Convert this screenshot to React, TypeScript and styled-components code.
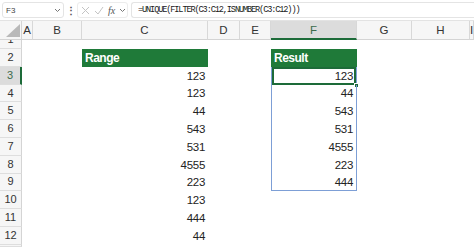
import styled, { createGlobalStyle } from "styled-components";

const GlobalStyle = createGlobalStyle`
  html, body { margin: 0; padding: 0; background: #ffffff; }
  body {
    width: 474px;
    height: 247px;
    overflow: hidden;
    font-family: "Liberation Sans Narrow", "Liberation Sans", Arial, sans-serif;
  }
`;

const Window = styled.div`
  width: 474px;
  height: 247px;
  overflow: hidden;
  display: flex;
  flex-direction: column;
  background: #fff;
`;

const FormulaBar = styled.div`
  height: 21px;
  flex: none;
  display: flex;
  align-items: center;
  padding: 0 0 0 2px;
  box-sizing: border-box;
  background: #fff;
  border-bottom: 1px solid #e3e3e3;
`;

const NameBox = styled.div`
  width: 62px;
  height: 16px;
  box-sizing: border-box;
  display: flex;
  align-items: center;
  justify-content: space-between;
  padding: 0 2px 0 3px;
  border: 1px solid #e4e4e4;
  border-radius: 3px;
  font-family: "Liberation Sans", Arial, sans-serif;
  font-size: 8px;
  color: #444;
`;

const Dots = styled.div`
  width: 13px;
  text-align: center;
  font-family: "Liberation Sans", Arial, sans-serif;
  font-size: 10px;
  font-weight: bold;
  color: #555;
`;

const IconBox = styled.div`
  width: 51px;
  height: 16px;
  box-sizing: border-box;
  display: flex;
  align-items: center;
  gap: 4px;
  padding-left: 3px;
  border: 1px solid #ececec;
  border-radius: 3px;
`;

const Fx = styled.span`
  font-family: "Liberation Serif", "Times New Roman", serif;
  font-style: italic;
  font-size: 10px;
  color: #555;
`;

const FormulaInput = styled.div`
  flex: 1;
  height: 16px;
  margin-left: 3px;
  box-sizing: border-box;
  display: flex;
  align-items: center;
  padding-left: 6px;
  border: 1px solid #e4e4e4;
  border-right: none;
  border-radius: 3px 0 0 3px;
  font-family: "Liberation Mono", "DejaVu Sans Mono", monospace;
  font-size: 8.6px;
  letter-spacing: -1.12px;
  color: #1a1a1a;
  white-space: nowrap;
`;

const Sheet = styled.div`
  flex: 1;
  display: grid;
  grid-template-columns: 22px 11px 49px 126px 32px 31px 86px 55px 58px 1fr;
  grid-template-rows: 19px 9px repeat(11, 17.8px) 1fr;
  overflow: hidden;
  font-size: 11.5px;
  color: #222;
`;

const Corner = styled.div`
  background: #f6f6f6;
  border-right: 1px solid #d4d4d4;
  border-bottom: 1px solid #d4d4d4;
  display: flex;
  align-items: flex-end;
  justify-content: flex-end;
  padding: 0 1px 2px 0;
  box-sizing: border-box;
`;

const ColHeader = styled.div<{ $active?: boolean }>`
  background: ${(p) => (p.$active ? "#dcdcdc" : "#f6f6f6")};
  border-right: 1px solid #d8d8d8;
  border-bottom: ${(p) => (p.$active ? "2px solid #1d6b39" : "1px solid #d4d4d4")};
  box-sizing: border-box;
  display: flex;
  align-items: center;
  justify-content: center;
  font-family: "Liberation Sans", Arial, sans-serif;
  font-size: 11.5px;
  color: ${(p) => (p.$active ? "#3d6b4c" : "#333")};
  overflow: hidden;
`;

const RowHeader = styled.div<{ $active?: boolean; $pin?: "top" | "bottom" }>`
  background: ${(p) => (p.$active ? "#dcdcdc" : "#f6f6f6")};
  border-right: ${(p) => (p.$active ? "2px solid #1d6b39" : "1px solid #d4d4d4")};
  border-bottom: 1px solid #dedede;
  box-sizing: border-box;
  display: flex;
  align-items: ${(p) => (p.$pin === "top" ? "flex-start" : p.$pin === "bottom" ? "flex-end" : "center")};
  justify-content: center;
  overflow: hidden;
  font-family: "Liberation Sans", Arial, sans-serif;
  font-size: 11px;
  color: ${(p) => (p.$active ? "#3d6b4c" : "#333")};
`;

const RowLabel = styled.span`
  flex: none;
  height: 17px;
  line-height: 17px;
`;

const Cell = styled.div<{
  $head?: boolean;
  $spill?: boolean;
  $spillEnd?: boolean;
  $selected?: boolean;
}>`
  position: relative;
  box-sizing: border-box;
  display: flex;
  align-items: center;
  justify-content: ${(p) => (p.$head ? "flex-start" : "flex-end")};
  padding: ${(p) => (p.$head ? "0 0 0 3px" : "0 3px 0 0")};
  background: ${(p) => (p.$head ? "#1f7a39" : "transparent")};
  color: ${(p) => (p.$head ? "#fff" : "#222")};
  font-weight: ${(p) => (p.$head ? "bold" : "normal")};
  font-size: ${(p) => (p.$head ? "12px" : "11.5px")};
  letter-spacing: ${(p) => (p.$head ? "-0.5px" : "-0.3px")};
  border-left: ${(p) => (p.$spill ? "1px solid #7d9fd6" : "none")};
  border-right: ${(p) => (p.$spill ? "1px solid #7d9fd6" : "none")};
  border-bottom: ${(p) => (p.$spillEnd ? "1px solid #7d9fd6" : "none")};
  box-shadow: ${(p) => (p.$selected ? "inset 0 0 0 2px #1d6b39" : "none")};
  white-space: nowrap;
`;

const FillHandle = styled.span`
  position: absolute;
  right: -3px;
  bottom: -3px;
  width: 5px;
  height: 5px;
  background: #1d6b39;
  border: 1px solid #fff;
  box-sizing: border-box;
`;

const letters = ["A", "B", "C", "D", "E", "F", "G", "H", "I"];

const columnC: Record<number, string> = {
  2: "Range",
  3: "123",
  4: "123",
  5: "44",
  6: "543",
  7: "531",
  8: "4555",
  9: "223",
  10: "123",
  11: "444",
  12: "44",
};

const columnF: Record<number, string> = {
  2: "Result",
  3: "123",
  4: "44",
  5: "543",
  6: "531",
  7: "4555",
  8: "223",
  9: "444",
};

const rows = [1, 2, 3, 4, 5, 6, 7, 8, 9, 10, 11, 12, 13];

function Chevron() {
  return (
    <svg width="7" height="5" viewBox="0 0 7 5">
      <path d="M1 1l2.5 2.5L6 1" fill="none" stroke="#777" strokeWidth="1" />
    </svg>
  );
}

export default function App() {
  return (
    <>
      <GlobalStyle />
      <Window>
        <FormulaBar>
          <NameBox>
            <span>F3</span>
            <Chevron />
          </NameBox>
          <Dots>⋮</Dots>
          <IconBox>
            <svg width="9" height="9" viewBox="0 0 9 9">
              <path d="M1 1l7 7M8 1L1 8" stroke="#c4c4c4" strokeWidth="1" />
            </svg>
            <svg width="10" height="9" viewBox="0 0 10 9">
              <path d="M1 5l3 3 5-7" fill="none" stroke="#c4c4c4" strokeWidth="1" />
            </svg>
            <Fx>fx</Fx>
            <Chevron />
          </IconBox>
          <FormulaInput>=UNIQUE(FILTER(C3:C12,ISNUMBER(C3:C12)))</FormulaInput>
        </FormulaBar>
        <Sheet>
          <Corner>
            <svg width="14" height="13" viewBox="0 0 14 13">
              <path d="M14 0V13H0Z" fill="#b9b9b9" />
            </svg>
          </Corner>
          {letters.map((l) => (
            <ColHeader key={l} $active={l === "F"}>
              {l}
            </ColHeader>
          ))}
          {rows.map((r) => (
            <Row key={r} r={r} />
          ))}
        </Sheet>
      </Window>
    </>
  );
}

function Row({ r }: { r: number }) {
  const pin = r === 1 ? "bottom" : r === 13 ? "top" : undefined;
  return (
    <>
      <RowHeader $active={r === 3} $pin={pin}>
        {r < 13 && <RowLabel>{r}</RowLabel>}
      </RowHeader>
      {letters.map((l) => {
        if (l === "C" && columnC[r]) {
          return (
            <Cell key={l} $head={r === 2}>
              {columnC[r]}
            </Cell>
          );
        }
        if (l === "F" && columnF[r]) {
          const spill = r >= 3 && r <= 9;
          return (
            <Cell
              key={l}
              $head={r === 2}
              $spill={spill}
              $spillEnd={r === 9}
              $selected={r === 3}
            >
              {columnF[r]}
              {r === 3 && <FillHandle />}
            </Cell>
          );
        }
        return <Cell key={l} />;
      })}
    </>
  );
}
